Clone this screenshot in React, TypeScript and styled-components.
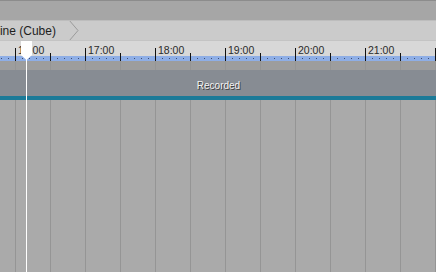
import React from "react";
import styled, { createGlobalStyle } from "styled-components";

const GlobalStyle = createGlobalStyle`
  html, body { margin: 0; padding: 0; height: 100%; overflow: hidden; }
  body { font-family: "Liberation Sans", Arial, sans-serif; background: #aaaaaa; }
  #root { height: 100%; }
`;

const Page = styled.div`
  position: relative;
  display: flex;
  flex-direction: column;
  width: 436px;
  height: 272px;
  overflow: hidden;
`;

const TopBar = styled.div`
  height: 19px;
  flex: none;
  background: #a6a6a6;
  border-top: 1px solid #8c8c8c;
`;

const Breadcrumb = styled.div`
  height: 21px;
  flex: none;
  display: flex;
  align-items: center;
  background: #cbcbcb;
  border-top: 1px solid #bdbdbd;
  box-sizing: border-box;
  border-bottom: 1px solid #c4c4c4;
  overflow: hidden;
`;

const Crumb = styled.span`
  font-size: 12px;
  color: #1e1e1e;
  margin-left: -29px;
  padding-top: 1px;
  white-space: nowrap;
`;

const Chevron = styled.svg`
  margin-left: 12px;
  flex: none;
`;

const Ruler = styled.div`
  height: 20px;
  flex: none;
  display: flex;
  background:
    linear-gradient(to right, #3d4d70 1px, transparent 1px) 1px 17px / 7px 1px repeat-x,
    linear-gradient(to bottom, #d8d8d8 0, #d8d8d8 15px, #8eaee6 15px, #8eaee6 20px);
`;

const RulerCell = styled.div<{ $first?: boolean }>`
  position: relative;
  flex: none;
  width: 70px;
  margin-left: ${(p) => (p.$first ? "-55px" : "0")};
  &::before {
    content: "";
    position: absolute;
    left: 0;
    top: 7px;
    width: 1px;
    height: 13px;
    background: #111;
  }
  &::after {
    content: "";
    position: absolute;
    left: 35px;
    top: 12px;
    width: 1px;
    height: 8px;
    background: #111;
  }
`;

const RulerLabel = styled.span`
  position: absolute;
  left: 3px;
  top: 3px;
  font-size: 10.5px;
  color: #2a2a2a;
  white-space: nowrap;
`;

const grid = `
  background-image: linear-gradient(to right, #959595 1px, transparent 1px);
  background-size: 35px 100%;
  background-position: 15px 0;
`;

const GridStrip = styled.div`
  height: 9px;
  flex: none;
  background-color: #9d9d9d;
  ${grid}
`;

const Track = styled.div`
  height: 26px;
  flex: none;
  box-sizing: border-box;
  padding-top: 5px;
  display: flex;
  align-items: center;
  justify-content: center;
  background: #878c93;
`;

const TrackLabel = styled.span`
  font-size: 10px;
  color: #f2f2f2;
  text-shadow: 1px 1px 0 #3a3a3a;
  margin-left: 1px;
`;

const TealLine = styled.div`
  height: 4px;
  flex: none;
  background: #1b7a98;
`;

const Body = styled.div`
  flex: 1;
  background-color: #aaaaaa;
  ${grid}
`;

const Playhead = styled.div`
  position: absolute;
  left: 21px;
  top: 41px;
  bottom: 0;
  width: 11px;
  pointer-events: none;
  &::before {
    content: "";
    position: absolute;
    left: 5px;
    top: 0;
    bottom: 0;
    width: 1px;
    background: #ffffff;
  }
`;

const PlayheadHead = styled.svg`
  position: absolute;
  left: 0;
  top: 0;
`;

const labels = ["", "16:00", "17:00", "18:00", "19:00", "20:00", "21:00", ""];

export default function App() {
  return (
    <>
      <GlobalStyle />
      <Page>
        <TopBar />
        <Breadcrumb>
          <Crumb>Timeline (Cube)</Crumb>
          <Chevron width="12" height="21" viewBox="0 0 12 21">
            <polyline points="1,0 10,10.5 1,21" fill="none" stroke="#9a9a9a" strokeWidth="1" />
          </Chevron>
        </Breadcrumb>
        <Ruler>
          {labels.map((l, i) => (
            <RulerCell key={i} $first={i === 0}>
              {l && <RulerLabel>{l}</RulerLabel>}
            </RulerCell>
          ))}
        </Ruler>
        <GridStrip />
        <Track>
          <TrackLabel>Recorded</TrackLabel>
        </Track>
        <TealLine />
        <Body />
        <Playhead>
          <PlayheadHead width="11" height="20" viewBox="0 0 11 20">
            <polygon points="0,0 11,0 11,14 5.5,19 0,14" fill="#ffffff" />
          </PlayheadHead>
        </Playhead>
      </Page>
    </>
  );
}
